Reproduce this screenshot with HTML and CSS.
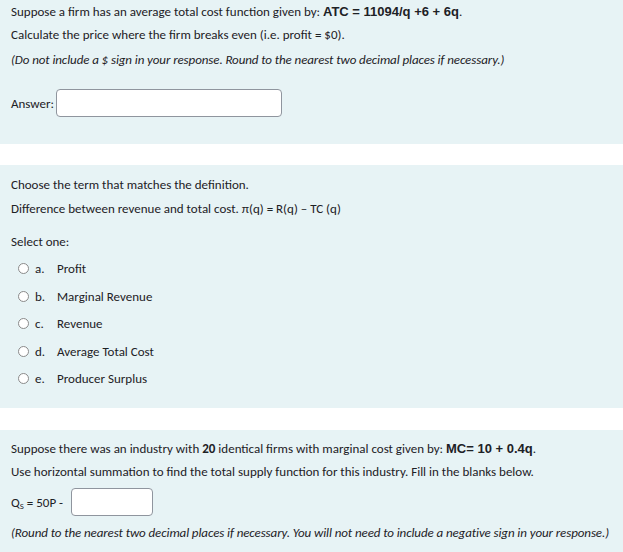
FILE: index.html
```html
<!DOCTYPE html>
<html>
<head>
<meta charset="utf-8">
<link rel="stylesheet" href="styles.css">
</head>
<body>
<section class="panel q1">
  <p class="line">Suppose a firm has an average total cost function given by: <b class="eq">ATC = 11094/q +6 + 6q</b>.</p>
  <p class="line">Calculate the price where the firm breaks even (i.e. profit = $0).</p>
  <p class="line note">(Do not include a $ sign in your response. Round to the nearest two decimal places if necessary.)</p>
  <div class="answer-row">
    <span class="label">Answer:</span>
    <span class="input wide"></span>
  </div>
</section>

<section class="panel q2">
  <p class="line">Choose the term that matches the definition.</p>
  <p class="line">Difference between revenue and total cost. π(q) = R(q) – TC (q)</p>
  <p class="line select">Select one:</p>
  <ul class="options">
    <li class="option"><span class="radio"></span><span class="letter">a.</span><span class="text">Profit</span></li>
    <li class="option"><span class="radio"></span><span class="letter">b.</span><span class="text">Marginal Revenue</span></li>
    <li class="option"><span class="radio"></span><span class="letter">c.</span><span class="text">Revenue</span></li>
    <li class="option"><span class="radio"></span><span class="letter">d.</span><span class="text">Average Total Cost</span></li>
    <li class="option"><span class="radio"></span><span class="letter">e.</span><span class="text">Producer Surplus</span></li>
  </ul>
</section>

<section class="panel q3">
  <p class="line">Suppose there was an industry with <b>20</b> identical firms with marginal cost given by: <b class="eq">MC= 10 + 0.4q</b>.</p>
  <p class="line">Use horizontal summation to find the total supply function for this industry. Fill in the blanks below.</p>
  <div class="answer-row qs">
    <span class="label">Q<sub>S</sub> = 50P -</span>
    <span class="input small"></span>
  </div>
  <p class="line note">(Round to the nearest two decimal places if necessary. You will not need to include a negative sign in your response.)</p>
</section>
</body>
</html>
```
FILE: styles.css
```css
html, body {
  margin: 0;
  padding: 0;
  background: #ffffff;
}
body {
  font-family: Carlito, Calibri, Lato, "Open Sans", sans-serif;
  font-size: 13px;
  color: #1d2125;
  width: 623px;
}
.panel {
  background: #e7f3f5;
  padding: 0 0 0 11px;
  overflow: hidden;
}
.q1 { height: 144px; margin-bottom: 21px; }
.q2 { height: 243px; margin-bottom: 22px; }
.q3 { height: 122px; }
.line {
  margin: 0;
  line-height: 20px;
  white-space: nowrap;
}
.eq {
  font-family: "Liberation Sans", Arial, sans-serif;
  font-weight: bold;
}
.note {
  font-style: italic;
  letter-spacing: -0.1px;
}

.q1 .line:nth-of-type(1) { margin-top: 2px; }
.q1 .line:nth-of-type(2) { margin-top: 3px; }
.q1 .line:nth-of-type(3) { margin-top: 5px; }
.answer-row {
  display: flex;
  align-items: center;
  gap: 2px;
}
.q1 .answer-row { margin-top: 19px; }
.input {
  display: block;
  background: #ffffff;
  border: 1px solid #8f959e;
  border-radius: 4px;
  box-sizing: border-box;
  height: 28px;
}
.input.wide { width: 226px; }
.input.small { width: 82px; }

.q2 .line:nth-of-type(1) { margin-top: 10px; }
.q2 .line:nth-of-type(2) { margin-top: 4px; }
.q2 .select { margin-top: 13px; }
.options {
  list-style: none;
  margin: 3px 0 0 0;
  padding: 0 0 0 7px;
}
.option {
  display: flex;
  align-items: center;
  height: 27.5px;
}
.radio {
  width: 9px;
  height: 9px;
  border: 1px solid #8a8a8a;
  border-radius: 50%;
  background: #ffffff;
  margin-right: 6px;
}
.letter { width: 22px; }

.q3 .line:nth-of-type(1) { margin-top: 9px; }
.q3 .line:nth-of-type(2) { margin-top: 3px; }
.q3 .qs { margin-top: 6px; gap: 8px; }
.q3 .note { margin-top: 7px; }
sub {
  font-size: 9px;
  vertical-align: -2px;
  line-height: 0;
}
```
